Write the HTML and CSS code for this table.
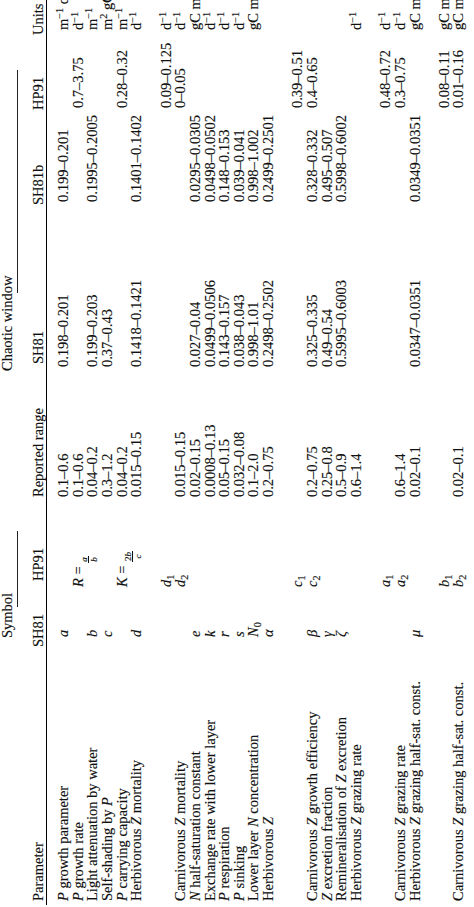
FILE: index.html
```html
<!DOCTYPE html>
<html lang="en">
<head>
<meta charset="utf-8">
<title>Parameter table</title>
<link rel="stylesheet" href="styles.css">
</head>
<body>
<div class="stage">
  <div class="row spanrow">
    <div class="span-sym">Symbol</div>
    <div class="span-ch">Chaotic window</div>
  </div>
  <div class="row rulerow">
    <div class="rule-sym"></div>
    <div class="rule-ch"></div>
  </div>
  <div class="row headrow">
    <div class="pc">Parameter</div>
    <div class="h-sh">SH81</div>
    <div class="h-hp">HP91</div>
    <div>Reported range</div>
    <div class="h-sh2">SH81</div>
    <div class="h-shb">SH81b</div>
    <div class="h-hp2">HP91</div>
    <div>Units</div>
  </div>
  <div class="body">
    <div class="row"><div class="pc"><i>P</i> growth parameter</div><div class="sym"><i>a</i></div><div></div><div>0.1–0.6</div><div>0.198–0.201</div><div>0.199–0.201</div><div></div><div class="un">m<sup>−1</sup> d<sup>−1</sup></div></div>
    <div class="row"><div class="pc"><i>P</i> growth rate</div><div></div><div><i>R</i> = <span class="frac"><span class="num"><i>a</i></span><span class="den"><i>b</i></span></span></div><div>0.1–0.6</div><div></div><div></div><div>0.7–3.75</div><div class="un">d<sup>−1</sup></div></div>
    <div class="row"><div class="pc">Light attenuation by water</div><div class="sym"><i>b</i></div><div></div><div>0.04–0.2</div><div>0.199–0.203</div><div>0.1995–0.2005</div><div></div><div class="un">m<sup>−1</sup></div></div>
    <div class="row"><div class="pc">Self-shading by <i>P</i></div><div class="sym"><i>c</i></div><div></div><div>0.3–1.2</div><div>0.37–0.43</div><div></div><div></div><div class="un">m<sup>2</sup> gC<sup>−1</sup></div></div>
    <div class="row"><div class="pc"><i>P</i> carrying capacity</div><div></div><div><i>K</i> = <span class="frac"><span class="num">2<i>b</i></span><span class="den"><i>c</i></span></span></div><div>0.04–0.2</div><div></div><div></div><div>0.28–0.32</div><div class="un">m<sup>−1</sup></div></div>
    <div class="row"><div class="pc">Herbivorous <i>Z</i> mortality</div><div class="sym"><i>d</i></div><div></div><div>0.015–0.15</div><div>0.1418–0.1421</div><div>0.1401–0.1402</div><div></div><div class="un">d<sup>−1</sup></div></div>
    <div class="row"></div>
    <div class="row"><div class="pc"></div><div></div><div><i>d</i><sub>1</sub></div><div></div><div></div><div></div><div>0.09–0.125</div><div class="un">d<sup>−1</sup></div></div>
    <div class="row"><div class="pc">Carnivorous <i>Z</i> mortality</div><div></div><div><i>d</i><sub>2</sub></div><div>0.015–0.15</div><div></div><div></div><div>0–0.05</div><div class="un">d<sup>−1</sup></div></div>
    <div class="row"><div class="pc"><i>N</i> half-saturation constant</div><div class="sym"><i>e</i></div><div></div><div>0.02–0.15</div><div>0.027–0.04</div><div>0.0295–0.0305</div><div></div><div class="un">gC m<sup>−3</sup></div></div>
    <div class="row"><div class="pc">Exchange rate with lower layer</div><div class="sym"><i>k</i></div><div></div><div>0.0008–0.13</div><div>0.0499–0.0506</div><div>0.0498–0.0502</div><div></div><div class="un">d<sup>−1</sup></div></div>
    <div class="row"><div class="pc"><i>P</i> respiration</div><div class="sym"><i>r</i></div><div></div><div>0.05–0.15</div><div>0.143–0.157</div><div>0.148–0.153</div><div></div><div class="un">d<sup>−1</sup></div></div>
    <div class="row"><div class="pc"><i>P</i> sinking</div><div class="sym"><i>s</i></div><div></div><div>0.032–0.08</div><div>0.038–0.043</div><div>0.039–0.041</div><div></div><div class="un">d<sup>−1</sup></div></div>
    <div class="row"><div class="pc">Lower layer <i>N</i> concentration</div><div class="sym"><i>N</i><sub>0</sub></div><div></div><div>0.1–2.0</div><div>0.998–1.01</div><div>0.998–1.002</div><div></div><div class="un">gC m<sup>−3</sup></div></div>
    <div class="row"><div class="pc">Herbivorous <i>Z</i></div><div class="sym"><i>α</i></div><div></div><div>0.2–0.75</div><div>0.2498–0.2502</div><div>0.2499–0.2501</div><div></div><div></div></div>
    <div class="row"></div>
    <div class="row"><div class="pc"></div><div></div><div><i>c</i><sub>1</sub></div><div></div><div></div><div></div><div>0.39–0.51</div><div></div></div>
    <div class="row"><div class="pc">Carnivorous <i>Z</i> growth efficiency</div><div class="sym"><i>β</i></div><div><i>c</i><sub>2</sub></div><div>0.2–0.75</div><div>0.325–0.335</div><div>0.328–0.332</div><div>0.4–0.65</div><div></div></div>
    <div class="row"><div class="pc"><i>Z</i> excretion fraction</div><div class="sym"><i>γ</i></div><div></div><div>0.25–0.8</div><div>0.49–0.54</div><div>0.495–0.507</div><div></div><div></div></div>
    <div class="row"><div class="pc">Remineralisation of <i>Z</i> excretion</div><div class="sym"><i>ζ</i></div><div></div><div>0.5–0.9</div><div>0.5995–0.6003</div><div>0.5998–0.6002</div><div></div><div></div></div>
    <div class="row"><div class="pc">Herbivorous <i>Z</i> grazing rate</div><div></div><div></div><div>0.6–1.4</div><div></div><div></div><div></div><div class="un">d<sup>−1</sup></div></div>
    <div class="row"></div>
    <div class="row"><div class="pc"></div><div></div><div><i>a</i><sub>1</sub></div><div></div><div></div><div></div><div>0.48–0.72</div><div class="un">d<sup>−1</sup></div></div>
    <div class="row"><div class="pc">Carnivorous <i>Z</i> grazing rate</div><div></div><div><i>a</i><sub>2</sub></div><div>0.6–1.4</div><div></div><div></div><div>0.3–0.75</div><div class="un">d<sup>−1</sup></div></div>
    <div class="row"><div class="pc">Herbivorous <i>Z</i> grazing half-sat. const.</div><div class="sym"><i>μ</i></div><div></div><div>0.02–0.1</div><div>0.0347–0.0351</div><div>0.0349–0.0351</div><div></div><div class="un">gC m<sup>−3</sup></div></div>
    <div class="row"></div>
    <div class="row"><div class="pc"></div><div></div><div><i>b</i><sub>1</sub></div><div></div><div></div><div></div><div>0.08–0.11</div><div class="un">gC m<sup>−3</sup></div></div>
    <div class="row"><div class="pc">Carnivorous <i>Z</i> grazing half-sat. const.</div><div></div><div><i>b</i><sub>2</sub></div><div>0.02–0.1</div><div></div><div></div><div>0.01–0.16</div><div class="un">gC m<sup>−3</sup></div></div>
  </div>
</div>
</body>
</html>
```

FILE: styles.css
```css
html, body {
  margin: 0;
  padding: 0;
  background: #ffffff;
  width: 474px;
  height: 907px;
  overflow: hidden;
}

.stage {
  width: 907px;
  height: 474px;
  transform-origin: 0 0;
  transform: translateY(907px) rotate(-90deg);
  font-family: "Liberation Serif", "Times New Roman", serif;
  font-size: 14.5px;
  line-height: 14.65px;
  color: #111111;
  -webkit-text-stroke: 0.15px #111111;
}

.row {
  display: grid;
  grid-template-columns: 264px 54px 90px 130px 165px 94px 73px 37px;
  height: 14.65px;
  white-space: nowrap;
}

.pc {
  padding-left: 4px;
}

.sym {
  padding-left: 4px;
}

.un {
  padding-left: 5px;
}

i {
  font-style: italic;
}

sup, sub {
  font-size: 70%;
  line-height: 0;
}

sup {
  vertical-align: 0.5em;
}

sub {
  vertical-align: -0.3em;
}

.frac {
  display: inline-flex;
  flex-direction: column;
  align-items: center;
  font-size: 9px;
  line-height: 8px;
  vertical-align: -4px;
}

.frac .num {
  border-bottom: 0.8px solid #111111;
  padding: 0 1px 0.5px;
}

.frac .den {
  padding-top: 0.5px;
}

.spanrow {
  margin-top: -2px;
}

.span-sym {
  grid-column: 2 / 4;
  padding-left: 3px;
}

.span-ch {
  grid-column: 5 / 8;
  margin-left: -4px;
}

.rulerow {
  height: 1px;
  margin-top: 2.4px;
}

.rule-sym {
  grid-column: 2 / 4;
  margin-left: 34px;
  margin-right: 34px;
  border-top: 1px solid #222;
}

.rule-ch {
  grid-column: 5 / 8;
  margin-left: 74px;
  margin-right: 35px;
  border-top: 1px solid #222;
}

.headrow {
  margin-top: 13.3px;
  height: 14.65px;
  border-bottom: 1.7px solid #000;
  box-sizing: content-box;
}

.h-sh { margin-left: -6px; }
.h-hp { padding-left: 6px; }
.h-sh2 { padding-left: 3px; }
.h-shb { margin-left: -3px; }
.h-hp2 { margin-left: -2px; }

.body {
  padding-top: 9.2px;
}
```
